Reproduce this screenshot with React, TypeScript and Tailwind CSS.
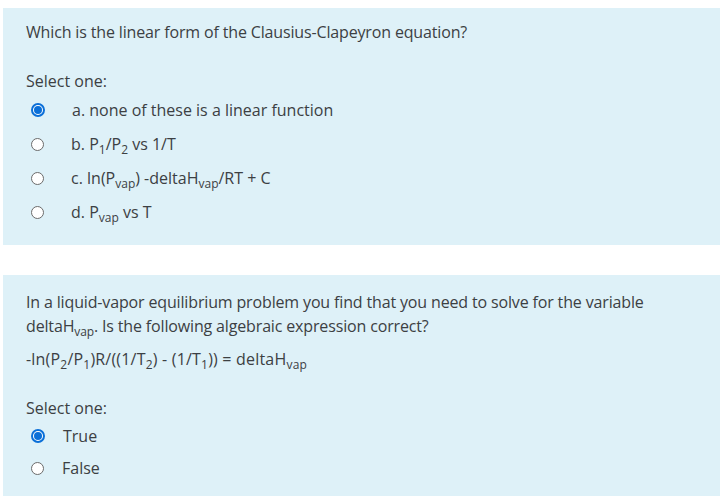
import React from "react";

const Sub = ({ children }: { children: React.ReactNode }) => (
  <span className="text-[12px] leading-none relative top-[4px]">{children}</span>
);

const Radio = ({ checked }: { checked?: boolean }) =>
  checked ? (
    <span className="w-[14px] h-[14px] rounded-full border-2 border-[#0a6fd8] bg-white flex items-center justify-center shrink-0">
      <span className="w-[8px] h-[8px] rounded-full bg-[#0a6fd8]" />
    </span>
  ) : (
    <span className="w-[13px] h-[13px] rounded-full border border-[#6b6b6b] bg-white shrink-0" />
  );

const Option = ({ checked, children }: { checked?: boolean; children: React.ReactNode }) => (
  <div className="flex items-center h-[34px] pl-[5px] gap-[27px]">
    <Radio checked={checked} />
    <span>{children}</span>
  </div>
);

export default function App() {
  return (
    <div
      className="w-[726px] h-[496px] bg-white overflow-hidden text-[16px] text-[#3c4043]"
      style={{ fontFamily: '"Open Sans", "Noto Sans", sans-serif' }}
    >
      <div className="mt-[8px] ml-[3px] w-[717px] h-[237px] bg-[#def1f8] pl-[23px] pt-[13px]">
        <p className="leading-[22px] tracking-[-0.15px]">Which is the linear form of the Clausius-Clapeyron equation?</p>
        <p className="leading-[22px] mt-[27px]">Select one:</p>
        <div className="mt-[1px]">
          <Option checked>a. none of these is a linear function</Option>
          <Option>
            b. P<Sub>1</Sub>/P<Sub>2</Sub> vs 1/T
          </Option>
          <Option>
            c. ln(P<Sub>vap</Sub>) -deltaH<Sub>vap</Sub>/RT + C
          </Option>
          <Option>
            d. P<Sub>vap</Sub> vs T
          </Option>
        </div>
      </div>

      <div className="mt-[30px] ml-[3px] w-[717px] h-[230px] bg-[#def1f8] pl-[23px] pt-[15px]">
        <p className="leading-[24px] tracking-[-0.15px]">
          In a liquid-vapor equilibrium problem you find that you need to solve for the variable
          <br />
          deltaH<Sub>vap</Sub>. Is the following algebraic expression correct?
        </p>
        <p className="leading-[24px] mt-[9px] tracking-[0.2px]">
          -ln(P<Sub>2</Sub>/P<Sub>1</Sub>)R/((1/T<Sub>2</Sub>) - (1/T<Sub>1</Sub>)) = deltaH<Sub>vap</Sub>
        </p>
        <p className="leading-[22px] mt-[26px]">Select one:</p>
        <div className="mt-[1px]">
          <div className="flex items-center h-[32px] pl-[5px] gap-[18px]">
            <Radio checked />
            <span>True</span>
          </div>
          <div className="flex items-center h-[32px] pl-[5px] gap-[18px]">
            <Radio />
            <span>False</span>
          </div>
        </div>
      </div>
    </div>
  );
}
